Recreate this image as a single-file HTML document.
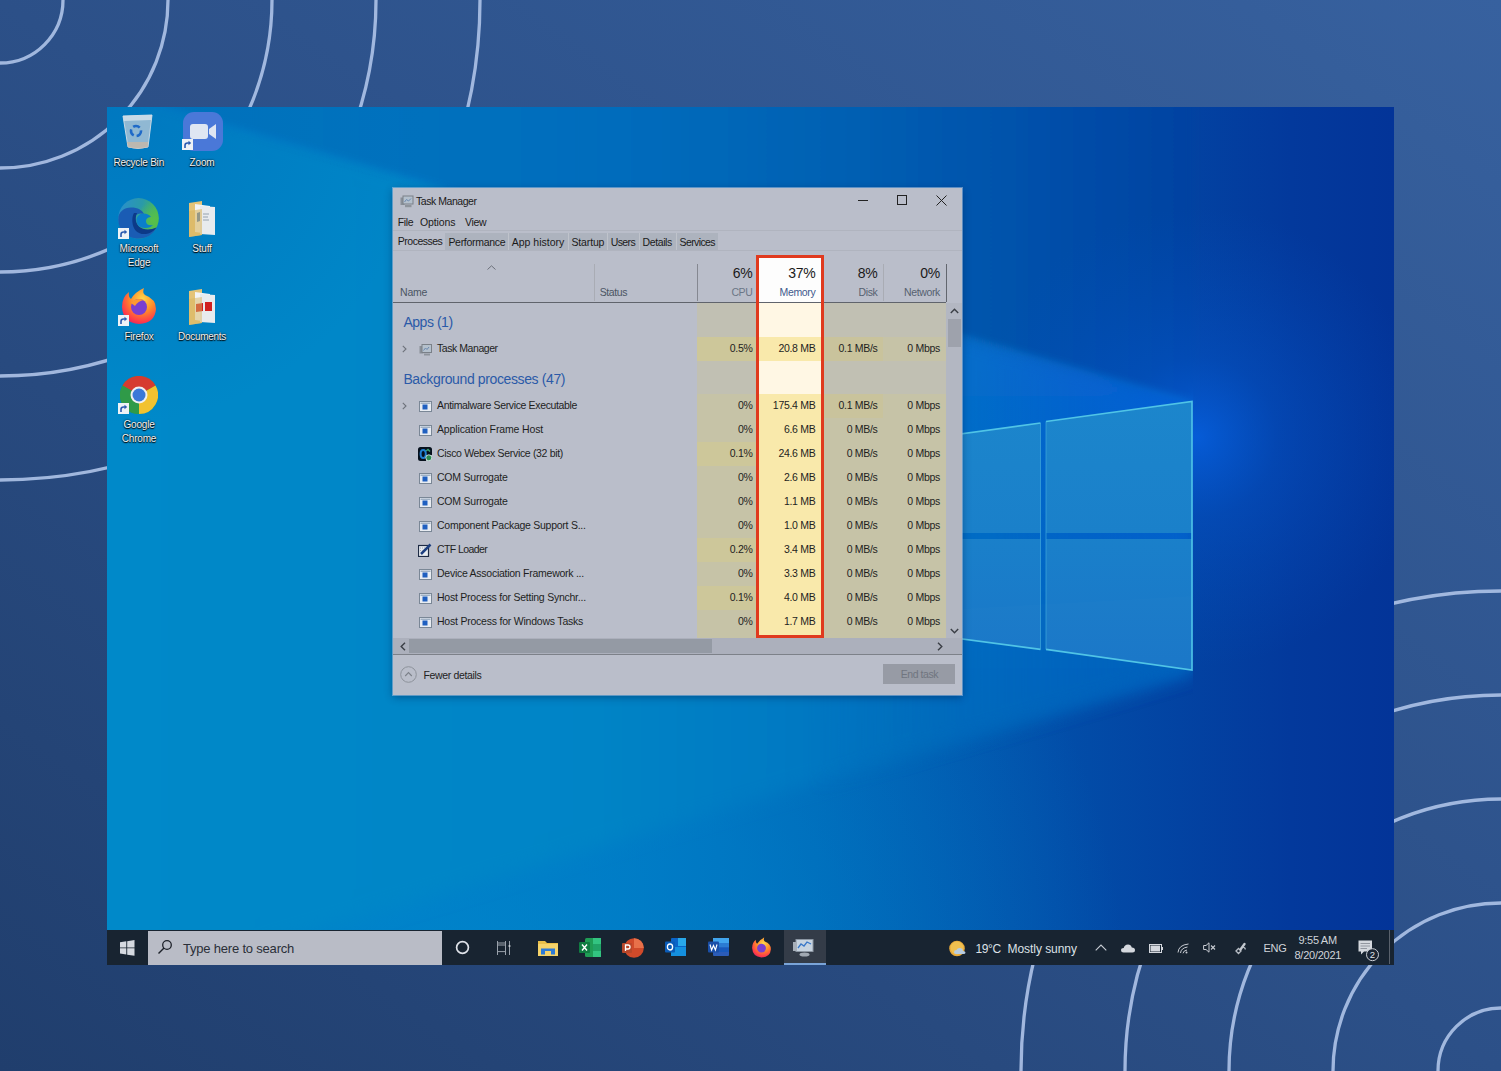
<!DOCTYPE html>
<html><head><meta charset="utf-8">
<style>
*{box-sizing:border-box;margin:0;padding:0}
html,body{width:1501px;height:1071px;overflow:hidden}
body{position:relative;font-family:"Liberation Sans",sans-serif;background:linear-gradient(to bottom left,#37619f 0%,#2c5088 50%,#203e6d 100%)}
.abs{position:absolute}
.tx{position:absolute;white-space:nowrap}
#rings{position:absolute;left:0;top:0}
#desk{position:absolute;left:107px;top:107px;width:1287px;height:858px;overflow:hidden}
#win{position:absolute;left:393px;top:188px;width:569px;height:507px;background:#babeca;border:0;box-shadow:0 0 0 1px rgba(170,195,225,.55),0 2px 8px rgba(0,25,70,.45);overflow:hidden;color:#1e1e1e}
#taskbar{position:absolute;left:107px;top:930px;width:1287px;height:35px;background:#182431}
.dl{position:absolute;text-align:center;color:#f2f2f2;font-size:10.5px;line-height:14px;letter-spacing:-0.3px;text-shadow:0 0 2px #000,0 1px 1px #000}
</style></head><body>
<svg id="rings" width="1501" height="1071" viewBox="0 0 1501 1071">
 <g fill="none" stroke="#aec3e8" stroke-opacity="0.9" stroke-width="3.3">
  <circle cx="0" cy="0" r="63"/><circle cx="0" cy="0" r="168"/><circle cx="0" cy="0" r="272"/><circle cx="0" cy="0" r="376"/><circle cx="0" cy="0" r="480"/>
  <circle cx="1501" cy="1071" r="63"/><circle cx="1501" cy="1071" r="168"/><circle cx="1501" cy="1071" r="272"/><circle cx="1501" cy="1071" r="376"/><circle cx="1501" cy="1071" r="480"/>
 </g>
</svg>
<div id="desk">
<svg width="1287" height="858" viewBox="0 0 1287 858" style="position:absolute;left:0;top:0">
 <defs>
  <linearGradient id="base" x1="0" y1="0" x2="1287" y2="0" gradientUnits="userSpaceOnUse">
   <stop offset="0" stop-color="#0079c0"/>
   <stop offset="0.40" stop-color="#006cbc"/>
   <stop offset="0.55" stop-color="#0062b4"/>
   <stop offset="0.72" stop-color="#0250aa"/>
   <stop offset="0.92" stop-color="#03399c"/>
   <stop offset="1" stop-color="#033498"/>
  </linearGradient>
  <linearGradient id="beam" x1="0" y1="0" x2="1085" y2="0" gradientUnits="userSpaceOnUse">
   <stop offset="0" stop-color="#0089c9"/>
   <stop offset="0.45" stop-color="#0084c6"/>
   <stop offset="0.75" stop-color="#0072c0"/>
   <stop offset="1" stop-color="#0266c8"/>
  </linearGradient>
  <radialGradient id="glow" cx="1090" cy="330" r="230" gradientUnits="userSpaceOnUse">
   <stop offset="0" stop-color="#0660e0" stop-opacity="0.85"/>
   <stop offset="0.35" stop-color="#0558d0" stop-opacity="0.4"/>
   <stop offset="1" stop-color="#0450c0" stop-opacity="0"/>
  </radialGradient>
  <linearGradient id="pane" x1="0" y1="290" x2="0" y2="565" gradientUnits="userSpaceOnUse">
   <stop offset="0" stop-color="#1c86cc"/>
   <stop offset="0.5" stop-color="#1a80ca"/>
   <stop offset="1" stop-color="#1976c8"/>
  </linearGradient>
  <filter id="bl" x="-5%" y="-5%" width="110%" height="110%"><feGaussianBlur stdDeviation="3"/></filter>
  <filter id="bl1" x="-5%" y="-5%" width="110%" height="110%"><feGaussianBlur stdDeviation="1.2"/></filter>
  <filter id="bl3" x="-20%" y="-20%" width="140%" height="140%"><feGaussianBlur stdDeviation="9"/></filter>
  <filter id="bl2" x="-20%" y="-20%" width="140%" height="140%"><feGaussianBlur stdDeviation="30"/></filter>
  <clipPath id="cl1"><rect x="-100" y="-100" width="1186" height="1100"/></clipPath>
  <radialGradient id="botg" cx="300" cy="900" r="720" gradientUnits="userSpaceOnUse">
   <stop offset="0" stop-color="#008cd0" stop-opacity="0.7"/>
   <stop offset="0.5" stop-color="#008cd0" stop-opacity="0.45"/>
   <stop offset="1" stop-color="#008cd0" stop-opacity="0"/>
  </radialGradient>
  <radialGradient id="tlg" cx="0" cy="0" r="320" gradientUnits="userSpaceOnUse">
   <stop offset="0" stop-color="#006ab8" stop-opacity="0.55"/>
   <stop offset="1" stop-color="#006ab8" stop-opacity="0"/>
  </radialGradient>
  <linearGradient id="beamv" x1="0" y1="230" x2="0" y2="650" gradientUnits="userSpaceOnUse">
   <stop offset="0" stop-color="#0868d8"/>
   <stop offset="0.5" stop-color="#0266c8"/>
   <stop offset="1" stop-color="#005eb0"/>
  </linearGradient>
  <linearGradient id="mkg" x1="700" y1="0" x2="1085" y2="0" gradientUnits="userSpaceOnUse">
   <stop offset="0" stop-color="#fff" stop-opacity="0"/>
   <stop offset="1" stop-color="#fff" stop-opacity="1"/>
  </linearGradient>
  <mask id="mk1" maskUnits="userSpaceOnUse" x="0" y="0" width="1287" height="858"><rect width="1287" height="858" fill="url(#mkg)"/></mask>
 </defs>
 <rect width="1287" height="858" fill="url(#base)"/>
 <rect width="1287" height="858" fill="url(#botg)"/>
 <g clip-path="url(#cl1)"><polygon points="-60,-40 1085,294 1085,564 -60,904" fill="url(#beam)" filter="url(#bl3)"/></g>
 <g clip-path="url(#cl1)" mask="url(#mk1)"><polygon points="-60,-40 1085,294 1085,564 -60,904" fill="url(#beamv)" filter="url(#bl3)"/></g>
 <polygon points="-80,-300 1086,-300 1086,294 -80,-37" fill="url(#base)" filter="url(#bl)"/>
 <rect width="600" height="500" fill="url(#tlg)"/>
 <ellipse cx="1110" cy="400" rx="260" ry="330" fill="url(#glow)"/>
 <line x1="-60" y1="-33" x2="1085" y2="294" stroke="#30a0ec" stroke-opacity="0.3" stroke-width="2" filter="url(#bl)"/>
 <g>
  <polygon points="780,337 933.5,316 933.5,426 780,426" fill="url(#pane)"/>
  <polygon points="780,432 933.5,432 933.5,542.4 780,522" fill="url(#pane)"/>
  <polygon points="939,314.5 1085,294.5 1085,426 939,426" fill="url(#pane)"/>
  <polygon points="939,432 1085,432 1085,563 939,542.4" fill="url(#pane)"/>
  <polygon points="780,506 1085,489 1085,563 780,522" fill="#ffffff" fill-opacity="0.012"/>
  <g stroke="#50c4e6" stroke-width="1.6" fill="none" stroke-linejoin="miter">
   <polyline points="780,337 933.5,316"/>
   <polyline points="939,314.5 1085,294.5 1085,563 939,542.4"/>
   <polyline points="780,522 933.5,542.4"/>
  </g>
  <g stroke="#3fa8dc" stroke-width="1" fill="none" opacity="0.7">
   <polyline points="933.5,316 933.5,542.4"/>
   <polyline points="939,314.5 939,542.4"/>
  </g>
 </g>
</svg>
<svg class="abs" style="left:14px;top:5px" width="34" height="38" viewBox="0 0 34 38"><path d="M2 4 L31 3 L27 35 Q17 38 7 35 Z" fill="#a9c3d6" fill-opacity="0.85" stroke="#c8d8e4" stroke-width="1"/><path d="M2 4 L31 3 L30 8 L3 9 Z" fill="#d4e2ec" fill-opacity="0.8"/><path d="M6 30 L27 30 L27 35 Q17 38 7 35 Z" fill="#c7b8a8" fill-opacity="0.8"/><circle cx="15" cy="19" r="5" fill="none" stroke="#1f6ac8" stroke-width="2.6" stroke-dasharray="7 3"/></svg><div class="dl" style="left:-18.30000000000001px;top:48.5px;width:100px;font-size:10px;line-height:14px;letter-spacing:-0.2px">Recycle Bin</div><svg class="abs" style="left:76px;top:5px" width="40" height="39" viewBox="0 0 40 39"><rect x="0" y="0" width="40" height="39" rx="11" fill="#4a78d8"/><rect x="7" y="12" width="18" height="15" rx="3" fill="#dfe6f2"/><path d="M26 17 L33 12 V27 L26 22 Z" fill="#dfe6f2"/></svg><svg class="abs" style="left:75px;top:32px" width="11" height="11" viewBox="0 0 11 11"><rect x="0" y="0" width="11" height="11" fill="#eef2f6"/><path d="M3 9 V6.5 Q3 4 5.5 4 H7.5" stroke="#2a5ab0" stroke-width="1.6" fill="none"/><path d="M6.5 1.8 L9.2 4 L6.5 6.2 Z" fill="#2a5ab0"/></svg><div class="dl" style="left:45px;top:48.5px;width:100px;font-size:10px;line-height:14px;letter-spacing:-0.2px">Zoom</div><svg class="abs" style="left:11px;top:91px" width="41" height="41" viewBox="0 0 41 41"><defs><linearGradient id="eg1" x1="0" y1="0" x2="1" y2="0.2"><stop offset="0" stop-color="#2a8ed0"/><stop offset="0.6" stop-color="#2a9aa8"/><stop offset="1" stop-color="#48b858"/></linearGradient><radialGradient id="eg3" cx="0.85" cy="0.55" r="0.45"><stop offset="0" stop-color="#58c048"/><stop offset="1" stop-color="#58c048" stop-opacity="0"/></radialGradient></defs><circle cx="20.5" cy="20.3" r="20.2" fill="url(#eg1)"/><circle cx="20.5" cy="20.3" r="20.2" fill="url(#eg3)"/><path d="M0.3,21 C0.3,14 6,9.5 13,9.5 C20,9.5 24,12 26,16 C22,14.5 18,16 16.5,19 C15,23 16,28 20,31 C25,34.5 33,34 38.5,29.5 C35.5,36 29,40.5 20.5,40.5 C9,40.5 0.3,32 0.3,21 Z" fill="#1a5cb4"/><path d="M16,15 C13.5,19 13.5,28 18,33 C23,38 33,37 38.5,29.5 C32,32.5 25,32 21,28.5 C17.5,25 17,19.5 19,15 Z" fill="#0c3a88"/><path d="M25.5,15.5 C21,15.5 18.5,19 18.5,22.5 C18.5,27 22,30 27,30 C31,30 33,29 35,27 C31,28 28,26.5 28,23.5 C28,20 31,19 33,19 C31.5,17 29,15.5 25.5,15.5 Z" fill="#0a7ecb"/></svg><svg class="abs" style="left:11px;top:121px" width="11" height="11" viewBox="0 0 11 11"><rect x="0" y="0" width="11" height="11" fill="#eef2f6"/><path d="M3 9 V6.5 Q3 4 5.5 4 H7.5" stroke="#2a5ab0" stroke-width="1.6" fill="none"/><path d="M6.5 1.8 L9.2 4 L6.5 6.2 Z" fill="#2a5ab0"/></svg><div class="dl" style="left:-18px;top:135px;width:100px;font-size:10px;line-height:14px;letter-spacing:-0.2px">Microsoft</div><div class="dl" style="left:-18px;top:149px;width:100px;font-size:10px;line-height:14px;letter-spacing:-0.2px">Edge</div><svg class="abs" style="left:81px;top:94px" width="28" height="37" viewBox="0 0 28 37"><path d="M1 2 L14 0 L14 34 L1 36 Z" fill="#e4c478"/><path d="M7 3 L22 5 L22 33 L7 31 Z" fill="#f2f4f6"/><path d="M12 5 L27 6 L27 34 L12 33 Z" fill="#e8ebee"/><path d="M9 12 L12 11 L12 20 L9 21 Z" fill="#2d6ac0"/><path d="M15 13 H21 M15 16 H20 M15 19 H21" stroke="#8090a0" stroke-width="0.8"/><path d="M1 36 L14 34 L14 8 L1 10 Z" fill="#d8b660" fill-opacity="0.6"/></svg><div class="dl" style="left:45px;top:135px;width:100px;font-size:10px;line-height:14px;letter-spacing:-0.2px">Stuff</div><svg class="abs" style="left:13px;top:180px" width="38" height="38" viewBox="0 0 38 38"><defs><radialGradient id="ff1" cx="0.6" cy="0.3" r="0.8"><stop offset="0" stop-color="#ffd84a"/><stop offset="0.45" stop-color="#ff8a2a"/><stop offset="0.8" stop-color="#ff3a4a"/><stop offset="1" stop-color="#d4206a"/></radialGradient></defs><path d="M19 37 Q3 36 2 20 Q2 10 9 5 Q8 10 11 12 Q15 5 24 1 Q22 6 25 8 Q36 12 36 22 Q35 36 19 37 Z" fill="url(#ff1)"/><circle cx="19" cy="20" r="8" fill="#7a3fd0"/><path d="M11 16 Q16 10 24 13 Q18 14 15 19 Z" fill="#ff9a30"/></svg><svg class="abs" style="left:11px;top:208px" width="11" height="11" viewBox="0 0 11 11"><rect x="0" y="0" width="11" height="11" fill="#eef2f6"/><path d="M3 9 V6.5 Q3 4 5.5 4 H7.5" stroke="#2a5ab0" stroke-width="1.6" fill="none"/><path d="M6.5 1.8 L9.2 4 L6.5 6.2 Z" fill="#2a5ab0"/></svg><div class="dl" style="left:-18px;top:222.7px;width:100px;font-size:10px;line-height:14px;letter-spacing:-0.2px">Firefox</div><svg class="abs" style="left:81px;top:182px" width="28" height="37" viewBox="0 0 28 37"><path d="M1 2 L14 0 L14 34 L1 36 Z" fill="#e4c478"/><path d="M7 3 L22 5 L22 33 L7 31 Z" fill="#f2f4f6"/><path d="M12 5 L27 6 L27 34 L12 33 Z" fill="#e8ebee"/><path d="M8 15 L15 14 L15 22 L8 23 Z" fill="#d02020"/><path d="M17 13 L24 13 L24 22 L17 22 Z" fill="#d02020"/><path d="M1 36 L14 34 L14 8 L1 10 Z" fill="#d8b660" fill-opacity="0.5"/></svg><div class="dl" style="left:45px;top:222.7px;width:100px;font-size:10px;line-height:14px;letter-spacing:-0.3px">Documents</div><svg class="abs" style="left:13px;top:268.6px" width="38" height="38" viewBox="0 0 38 38"><circle cx="19" cy="19" r="19" fill="#2f9a48"/><path d="M19 19 L2.5 9.5 A19 19 0 0 1 35.5 9.5 Z" fill="#d63b30"/><path d="M19 19 L35.5 9.5 A19 19 0 0 1 19 38 Z" fill="#f2c230"/><path d="M19 19 L19 38 A19 19 0 0 1 2.5 9.5 Z" fill="#2f9a48"/><circle cx="19" cy="19" r="8.5" fill="#f0f0f0"/><circle cx="19" cy="19" r="6.5" fill="#3b78d8"/></svg><svg class="abs" style="left:11px;top:296px" width="11" height="11" viewBox="0 0 11 11"><rect x="0" y="0" width="11" height="11" fill="#eef2f6"/><path d="M3 9 V6.5 Q3 4 5.5 4 H7.5" stroke="#2a5ab0" stroke-width="1.6" fill="none"/><path d="M6.5 1.8 L9.2 4 L6.5 6.2 Z" fill="#2a5ab0"/></svg><div class="dl" style="left:-18px;top:311px;width:100px;font-size:10px;line-height:14px;letter-spacing:-0.2px">Google</div><div class="dl" style="left:-18px;top:325px;width:100px;font-size:10px;line-height:14px;letter-spacing:-0.2px">Chrome</div></div>
<div id="win"><svg class="abs" style="left:6.5px;top:7px" width="14" height="13" viewBox="0 0 14 13"><rect x="0.5" y="2.5" width="4" height="7.5" fill="#8a9098"/><rect x="3" y="1" width="10" height="8" fill="#b4c0cc" stroke="#7a8088" stroke-width="1"/><path d="M4.5 7 L6.5 4.5 L8.5 6 L11 3.5" stroke="#6a88b0" stroke-width="1" fill="none"/><rect x="5" y="10" width="6.5" height="2.2" fill="#8e949c"/></svg><div class="tx" style="left:23px;top:7.81px;font-size:10.5px;line-height:10.5px;color:#1a1a1a;letter-spacing:-0.45px;">Task Manager</div><div class="abs" style="left:465px;top:12px;width:10px;height:1px;background:#222"></div><div class="abs" style="left:504px;top:7px;width:10px;height:10px;border:1px solid #222"></div><svg class="abs" style="left:543px;top:7px" width="11" height="11" viewBox="0 0 11 11"><path d="M0.5 0.5 L10.5 10.5 M10.5 0.5 L0.5 10.5" stroke="#222" stroke-width="1"/></svg><div class="tx" style="left:4.7px;top:28.81px;font-size:10.5px;line-height:10.5px;color:#1a1a1a;letter-spacing:-0.3px;">File</div><div class="tx" style="left:27px;top:28.81px;font-size:10.5px;line-height:10.5px;color:#1a1a1a;letter-spacing:-0.1px;">Options</div><div class="tx" style="left:72px;top:28.81px;font-size:10.5px;line-height:10.5px;color:#1a1a1a;letter-spacing:-0.3px;">View</div><div class="abs" style="left:0;top:41.5px;width:569px;height:1px;background:#b0b4bf"></div><div class="abs" style="left:51.7px;top:45px;width:273.3px;height:17px;background:#adb3be"></div><div class="abs" style="left:115.4px;top:45px;width:1px;height:17px;background:#bfc3cb"></div><div class="abs" style="left:174.8px;top:45px;width:1px;height:17px;background:#bfc3cb"></div><div class="abs" style="left:214.4px;top:45px;width:1px;height:17px;background:#bfc3cb"></div><div class="abs" style="left:246.0px;top:45px;width:1px;height:17px;background:#bfc3cb"></div><div class="abs" style="left:282.5px;top:45px;width:1px;height:17px;background:#bfc3cb"></div><div class="abs" style="left:0;top:62.2px;width:569px;height:1px;background:#b0b4bf"></div><div class="tx" style="left:4.8px;top:48.41px;font-size:10.5px;line-height:10.5px;color:#1a1a1a;letter-spacing:-0.5px;">Processes</div><div class="tx" style="left:55.4px;top:49.41px;font-size:10.5px;line-height:10.5px;color:#1a1a1a;letter-spacing:-0.3px;">Performance</div><div class="tx" style="left:118.7px;top:49.41px;font-size:10.5px;line-height:10.5px;color:#1a1a1a;letter-spacing:0px;">App history</div><div class="tx" style="left:178.5px;top:49.41px;font-size:10.5px;line-height:10.5px;color:#1a1a1a;letter-spacing:-0.15px;">Startup</div><div class="tx" style="left:217.7px;top:49.41px;font-size:10.5px;line-height:10.5px;color:#1a1a1a;letter-spacing:-0.6px;">Users</div><div class="tx" style="left:249.6px;top:49.41px;font-size:10.5px;line-height:10.5px;color:#1a1a1a;letter-spacing:-0.4px;">Details</div><div class="tx" style="left:286.5px;top:49.41px;font-size:10.5px;line-height:10.5px;color:#1a1a1a;letter-spacing:-0.6px;">Services</div><div class="abs" style="left:364px;top:68px;width:67px;height:46px;background:#fdfdfd"></div><svg class="abs" style="left:94px;top:77px" width="9" height="5" viewBox="0 0 9 5"><path d="M0.5 4.5 L4.5 0.8 L8.5 4.5" stroke="#6b707a" stroke-width="1" fill="none"/></svg><div class="tx" style="left:7px;top:98.81px;font-size:10.5px;line-height:10.5px;color:#4b5563;letter-spacing:-0.2px;">Name</div><div class="tx" style="left:206.7px;top:98.81px;font-size:10.5px;line-height:10.5px;color:#4b5563;letter-spacing:-0.4px;">Status</div><div class="abs" style="left:201px;top:76px;width:1px;height:37px;background:#a9acb4"></div><div class="abs" style="left:303.5px;top:76px;width:1px;height:37px;background:#858891"></div><div class="abs" style="left:490px;top:76px;width:1px;height:37px;background:#a9acb4"></div><div class="abs" style="left:552.5px;top:76px;width:1px;height:38px;background:#62666e"></div><div class="abs" style="left:0;top:114px;width:553px;height:1px;background:#60646c"></div><div class="tx" style="right:209.5px;top:78.15px;font-size:14px;line-height:14px;color:#1a1a1a;letter-spacing:-0.3px;">6%</div><div class="tx" style="right:209.5px;top:99.11px;font-size:10.5px;line-height:10.5px;color:#6b7686;letter-spacing:-0.35px;">CPU</div><div class="tx" style="right:146.6px;top:78.15px;font-size:14px;line-height:14px;color:#1a1a1a;letter-spacing:-0.3px;">37%</div><div class="tx" style="right:146.6px;top:99.11px;font-size:10.5px;line-height:10.5px;color:#3f5a8c;letter-spacing:-0.35px;">Memory</div><div class="tx" style="right:84.5px;top:78.15px;font-size:14px;line-height:14px;color:#1a1a1a;letter-spacing:-0.3px;">8%</div><div class="tx" style="right:84.5px;top:99.11px;font-size:10.5px;line-height:10.5px;color:#566170;letter-spacing:-0.35px;">Disk</div><div class="tx" style="right:22px;top:78.15px;font-size:14px;line-height:14px;color:#1a1a1a;letter-spacing:-0.3px;">0%</div><div class="tx" style="right:22px;top:99.11px;font-size:10.5px;line-height:10.5px;color:#566170;letter-spacing:-0.35px;">Network</div><div class="abs" style="left:0;top:115px;width:553px;height:335px;overflow:hidden"><div class="abs" style="left:304px;top:0.0px;width:249px;height:34px;background:#c1c0b3"></div><div class="abs" style="left:364px;top:0.0px;width:67px;height:34px;background:#fff7e4"></div><div class="tx" style="left:10.4px;top:12.45px;font-size:14px;line-height:14px;color:#2b5aa8;letter-spacing:-0.46px;">Apps (1)</div><div class="abs" style="left:304px;top:34.0px;width:60px;height:24px;background:#cdc79a"></div><div class="abs" style="left:364px;top:34.0px;width:67px;height:24px;background:#f9e9ab"></div><div class="abs" style="left:431px;top:34.0px;width:59px;height:24px;background:#c9c39c"></div><div class="abs" style="left:490px;top:34.0px;width:63px;height:24px;background:#c6c3a7"></div><svg class="abs" style="left:9px;top:42.0px" width="5" height="8" viewBox="0 0 5 8"><path d="M0.8 0.8 L4 4 L0.8 7.2" stroke="#6d727b" stroke-width="1.1" fill="none"/></svg><svg class="abs" style="left:25.5px;top:40.5px" width="13" height="12" viewBox="0 0 13 12"><rect x="0.5" y="2" width="4" height="7.5" fill="#8a9098"/><rect x="3" y="0.5" width="9.5" height="8" fill="#b4c0cc" stroke="#7a8088" stroke-width="1"/><path d="M4.5 6.5 L6.5 4 L8 5.5 L10 3" stroke="#6a88b0" stroke-width="1" fill="none"/><rect x="5" y="9.5" width="6" height="2" fill="#8e949c"/></svg><div class="tx" style="left:44px;top:40.11px;font-size:10.5px;line-height:10.5px;color:#1e1e1e;letter-spacing:-0.44px;">Task Manager</div><div class="tx" style="right:193.5px;top:40.11px;font-size:10.5px;line-height:10.5px;color:#1e1e1e;letter-spacing:-0.3px;">0.5%</div><div class="tx" style="right:130.6px;top:40.11px;font-size:10.5px;line-height:10.5px;color:#1e1e1e;letter-spacing:-0.3px;">20.8 MB</div><div class="tx" style="right:68.5px;top:40.11px;font-size:10.5px;line-height:10.5px;color:#1e1e1e;letter-spacing:-0.3px;">0.1 MB/s</div><div class="tx" style="right:6px;top:40.11px;font-size:10.5px;line-height:10.5px;color:#1e1e1e;letter-spacing:-0.3px;">0 Mbps</div><div class="abs" style="left:304px;top:58.0px;width:249px;height:33px;background:#c1c0b3"></div><div class="abs" style="left:364px;top:58.0px;width:67px;height:33px;background:#fff7e4"></div><div class="tx" style="left:10.4px;top:69.45px;font-size:14px;line-height:14px;color:#2b5aa8;letter-spacing:-0.38px;">Background processes (47)</div><div class="abs" style="left:304px;top:91.0px;width:60px;height:24px;background:#c6c3a7"></div><div class="abs" style="left:364px;top:91.0px;width:67px;height:24px;background:#f9e9ab"></div><div class="abs" style="left:431px;top:91.0px;width:59px;height:24px;background:#c9c39c"></div><div class="abs" style="left:490px;top:91.0px;width:63px;height:24px;background:#c6c3a7"></div><svg class="abs" style="left:9px;top:99.0px" width="5" height="8" viewBox="0 0 5 8"><path d="M0.8 0.8 L4 4 L0.8 7.2" stroke="#6d727b" stroke-width="1.1" fill="none"/></svg><svg class="abs" style="left:25.5px;top:97.5px" width="13" height="11" viewBox="0 0 13 11"><rect x="0.5" y="0.5" width="12" height="10" fill="#e8ecf2" stroke="#7a8796" stroke-width="1"/><rect x="1.5" y="1.5" width="10" height="1.5" fill="#9fb0c4"/><rect x="3.5" y="3.5" width="5" height="5" fill="#1f5fc0"/></svg><div class="tx" style="left:44px;top:97.11px;font-size:10.5px;line-height:10.5px;color:#1e1e1e;letter-spacing:-0.35px;">Antimalware Service Executable</div><div class="tx" style="right:193.5px;top:97.11px;font-size:10.5px;line-height:10.5px;color:#1e1e1e;letter-spacing:-0.3px;">0%</div><div class="tx" style="right:130.6px;top:97.11px;font-size:10.5px;line-height:10.5px;color:#1e1e1e;letter-spacing:-0.3px;">175.4 MB</div><div class="tx" style="right:68.5px;top:97.11px;font-size:10.5px;line-height:10.5px;color:#1e1e1e;letter-spacing:-0.3px;">0.1 MB/s</div><div class="tx" style="right:6px;top:97.11px;font-size:10.5px;line-height:10.5px;color:#1e1e1e;letter-spacing:-0.3px;">0 Mbps</div><div class="abs" style="left:304px;top:115.0px;width:60px;height:24px;background:#c6c3a7"></div><div class="abs" style="left:364px;top:115.0px;width:67px;height:24px;background:#f9e9ab"></div><div class="abs" style="left:431px;top:115.0px;width:59px;height:24px;background:#c6c3a7"></div><div class="abs" style="left:490px;top:115.0px;width:63px;height:24px;background:#c6c3a7"></div><svg class="abs" style="left:25.5px;top:121.5px" width="13" height="11" viewBox="0 0 13 11"><rect x="0.5" y="0.5" width="12" height="10" fill="#e8ecf2" stroke="#7a8796" stroke-width="1"/><rect x="1.5" y="1.5" width="10" height="1.5" fill="#9fb0c4"/><rect x="3.5" y="3.5" width="5" height="5" fill="#1f5fc0"/></svg><div class="tx" style="left:44px;top:121.11px;font-size:10.5px;line-height:10.5px;color:#1e1e1e;letter-spacing:-0.14px;">Application Frame Host</div><div class="tx" style="right:193.5px;top:121.11px;font-size:10.5px;line-height:10.5px;color:#1e1e1e;letter-spacing:-0.3px;">0%</div><div class="tx" style="right:130.6px;top:121.11px;font-size:10.5px;line-height:10.5px;color:#1e1e1e;letter-spacing:-0.3px;">6.6 MB</div><div class="tx" style="right:68.5px;top:121.11px;font-size:10.5px;line-height:10.5px;color:#1e1e1e;letter-spacing:-0.3px;">0 MB/s</div><div class="tx" style="right:6px;top:121.11px;font-size:10.5px;line-height:10.5px;color:#1e1e1e;letter-spacing:-0.3px;">0 Mbps</div><div class="abs" style="left:304px;top:139.0px;width:60px;height:24px;background:#cdc79a"></div><div class="abs" style="left:364px;top:139.0px;width:67px;height:24px;background:#f9e9ab"></div><div class="abs" style="left:431px;top:139.0px;width:59px;height:24px;background:#c6c3a7"></div><div class="abs" style="left:490px;top:139.0px;width:63px;height:24px;background:#c6c3a7"></div><svg class="abs" style="left:24.5px;top:144.0px" width="14" height="14" viewBox="0 0 14 14"><path d="M2.5 0 H11.5 Q14 0 14 2.5 V8 H8 V14 H2.5 Q0 14 0 11.5 V2.5 Q0 0 2.5 0 Z" fill="#06101c"/><ellipse cx="5.2" cy="7" rx="2.6" ry="4" fill="none" stroke="#1f7fd0" stroke-width="2"/><path d="M8 4 L10 2.5 L12 4.5" stroke="#3aa070" stroke-width="1.5" fill="none"/><circle cx="10.8" cy="10.8" r="3" fill="#2a8a50" stroke="#d0e0e0" stroke-width="0.9"/></svg><div class="tx" style="left:44px;top:145.11px;font-size:10.5px;line-height:10.5px;color:#1e1e1e;letter-spacing:-0.33px;">Cisco Webex Service (32 bit)</div><div class="tx" style="right:193.5px;top:145.11px;font-size:10.5px;line-height:10.5px;color:#1e1e1e;letter-spacing:-0.3px;">0.1%</div><div class="tx" style="right:130.6px;top:145.11px;font-size:10.5px;line-height:10.5px;color:#1e1e1e;letter-spacing:-0.3px;">24.6 MB</div><div class="tx" style="right:68.5px;top:145.11px;font-size:10.5px;line-height:10.5px;color:#1e1e1e;letter-spacing:-0.3px;">0 MB/s</div><div class="tx" style="right:6px;top:145.11px;font-size:10.5px;line-height:10.5px;color:#1e1e1e;letter-spacing:-0.3px;">0 Mbps</div><div class="abs" style="left:304px;top:163.0px;width:60px;height:24px;background:#c6c3a7"></div><div class="abs" style="left:364px;top:163.0px;width:67px;height:24px;background:#f9e9ab"></div><div class="abs" style="left:431px;top:163.0px;width:59px;height:24px;background:#c6c3a7"></div><div class="abs" style="left:490px;top:163.0px;width:63px;height:24px;background:#c6c3a7"></div><svg class="abs" style="left:25.5px;top:169.5px" width="13" height="11" viewBox="0 0 13 11"><rect x="0.5" y="0.5" width="12" height="10" fill="#e8ecf2" stroke="#7a8796" stroke-width="1"/><rect x="1.5" y="1.5" width="10" height="1.5" fill="#9fb0c4"/><rect x="3.5" y="3.5" width="5" height="5" fill="#1f5fc0"/></svg><div class="tx" style="left:44px;top:169.11px;font-size:10.5px;line-height:10.5px;color:#1e1e1e;letter-spacing:-0.22px;">COM Surrogate</div><div class="tx" style="right:193.5px;top:169.11px;font-size:10.5px;line-height:10.5px;color:#1e1e1e;letter-spacing:-0.3px;">0%</div><div class="tx" style="right:130.6px;top:169.11px;font-size:10.5px;line-height:10.5px;color:#1e1e1e;letter-spacing:-0.3px;">2.6 MB</div><div class="tx" style="right:68.5px;top:169.11px;font-size:10.5px;line-height:10.5px;color:#1e1e1e;letter-spacing:-0.3px;">0 MB/s</div><div class="tx" style="right:6px;top:169.11px;font-size:10.5px;line-height:10.5px;color:#1e1e1e;letter-spacing:-0.3px;">0 Mbps</div><div class="abs" style="left:304px;top:187.0px;width:60px;height:24px;background:#c6c3a7"></div><div class="abs" style="left:364px;top:187.0px;width:67px;height:24px;background:#f9e9ab"></div><div class="abs" style="left:431px;top:187.0px;width:59px;height:24px;background:#c6c3a7"></div><div class="abs" style="left:490px;top:187.0px;width:63px;height:24px;background:#c6c3a7"></div><svg class="abs" style="left:25.5px;top:193.5px" width="13" height="11" viewBox="0 0 13 11"><rect x="0.5" y="0.5" width="12" height="10" fill="#e8ecf2" stroke="#7a8796" stroke-width="1"/><rect x="1.5" y="1.5" width="10" height="1.5" fill="#9fb0c4"/><rect x="3.5" y="3.5" width="5" height="5" fill="#1f5fc0"/></svg><div class="tx" style="left:44px;top:193.11px;font-size:10.5px;line-height:10.5px;color:#1e1e1e;letter-spacing:-0.22px;">COM Surrogate</div><div class="tx" style="right:193.5px;top:193.11px;font-size:10.5px;line-height:10.5px;color:#1e1e1e;letter-spacing:-0.3px;">0%</div><div class="tx" style="right:130.6px;top:193.11px;font-size:10.5px;line-height:10.5px;color:#1e1e1e;letter-spacing:-0.3px;">1.1 MB</div><div class="tx" style="right:68.5px;top:193.11px;font-size:10.5px;line-height:10.5px;color:#1e1e1e;letter-spacing:-0.3px;">0 MB/s</div><div class="tx" style="right:6px;top:193.11px;font-size:10.5px;line-height:10.5px;color:#1e1e1e;letter-spacing:-0.3px;">0 Mbps</div><div class="abs" style="left:304px;top:211.0px;width:60px;height:24px;background:#c6c3a7"></div><div class="abs" style="left:364px;top:211.0px;width:67px;height:24px;background:#f9e9ab"></div><div class="abs" style="left:431px;top:211.0px;width:59px;height:24px;background:#c6c3a7"></div><div class="abs" style="left:490px;top:211.0px;width:63px;height:24px;background:#c6c3a7"></div><svg class="abs" style="left:25.5px;top:217.5px" width="13" height="11" viewBox="0 0 13 11"><rect x="0.5" y="0.5" width="12" height="10" fill="#e8ecf2" stroke="#7a8796" stroke-width="1"/><rect x="1.5" y="1.5" width="10" height="1.5" fill="#9fb0c4"/><rect x="3.5" y="3.5" width="5" height="5" fill="#1f5fc0"/></svg><div class="tx" style="left:44px;top:217.11px;font-size:10.5px;line-height:10.5px;color:#1e1e1e;letter-spacing:-0.26px;">Component Package Support S...</div><div class="tx" style="right:193.5px;top:217.11px;font-size:10.5px;line-height:10.5px;color:#1e1e1e;letter-spacing:-0.3px;">0%</div><div class="tx" style="right:130.6px;top:217.11px;font-size:10.5px;line-height:10.5px;color:#1e1e1e;letter-spacing:-0.3px;">1.0 MB</div><div class="tx" style="right:68.5px;top:217.11px;font-size:10.5px;line-height:10.5px;color:#1e1e1e;letter-spacing:-0.3px;">0 MB/s</div><div class="tx" style="right:6px;top:217.11px;font-size:10.5px;line-height:10.5px;color:#1e1e1e;letter-spacing:-0.3px;">0 Mbps</div><div class="abs" style="left:304px;top:235.0px;width:60px;height:24px;background:#cdc79a"></div><div class="abs" style="left:364px;top:235.0px;width:67px;height:24px;background:#f9e9ab"></div><div class="abs" style="left:431px;top:235.0px;width:59px;height:24px;background:#c6c3a7"></div><div class="abs" style="left:490px;top:235.0px;width:63px;height:24px;background:#c6c3a7"></div><svg class="abs" style="left:24.5px;top:240.0px" width="14" height="14" viewBox="0 0 14 14"><rect x="0.5" y="2.5" width="10" height="11" fill="#e8ecf0" stroke="#1d2a44" stroke-width="1.2"/><path d="M3 11 L12.5 1.5" stroke="#1d3f80" stroke-width="2.5"/><path d="M2 5 H8 M2 7.5 H6" stroke="#8a96a8" stroke-width="0.8" stroke-dasharray="1 1"/></svg><div class="tx" style="left:44px;top:241.11px;font-size:10.5px;line-height:10.5px;color:#1e1e1e;letter-spacing:-0.6px;">CTF Loader</div><div class="tx" style="right:193.5px;top:241.11px;font-size:10.5px;line-height:10.5px;color:#1e1e1e;letter-spacing:-0.3px;">0.2%</div><div class="tx" style="right:130.6px;top:241.11px;font-size:10.5px;line-height:10.5px;color:#1e1e1e;letter-spacing:-0.3px;">3.4 MB</div><div class="tx" style="right:68.5px;top:241.11px;font-size:10.5px;line-height:10.5px;color:#1e1e1e;letter-spacing:-0.3px;">0 MB/s</div><div class="tx" style="right:6px;top:241.11px;font-size:10.5px;line-height:10.5px;color:#1e1e1e;letter-spacing:-0.3px;">0 Mbps</div><div class="abs" style="left:304px;top:259.0px;width:60px;height:24px;background:#c6c3a7"></div><div class="abs" style="left:364px;top:259.0px;width:67px;height:24px;background:#f9e9ab"></div><div class="abs" style="left:431px;top:259.0px;width:59px;height:24px;background:#c6c3a7"></div><div class="abs" style="left:490px;top:259.0px;width:63px;height:24px;background:#c6c3a7"></div><svg class="abs" style="left:25.5px;top:265.5px" width="13" height="11" viewBox="0 0 13 11"><rect x="0.5" y="0.5" width="12" height="10" fill="#e8ecf2" stroke="#7a8796" stroke-width="1"/><rect x="1.5" y="1.5" width="10" height="1.5" fill="#9fb0c4"/><rect x="3.5" y="3.5" width="5" height="5" fill="#1f5fc0"/></svg><div class="tx" style="left:44px;top:265.11px;font-size:10.5px;line-height:10.5px;color:#1e1e1e;letter-spacing:-0.26px;">Device Association Framework ...</div><div class="tx" style="right:193.5px;top:265.11px;font-size:10.5px;line-height:10.5px;color:#1e1e1e;letter-spacing:-0.3px;">0%</div><div class="tx" style="right:130.6px;top:265.11px;font-size:10.5px;line-height:10.5px;color:#1e1e1e;letter-spacing:-0.3px;">3.3 MB</div><div class="tx" style="right:68.5px;top:265.11px;font-size:10.5px;line-height:10.5px;color:#1e1e1e;letter-spacing:-0.3px;">0 MB/s</div><div class="tx" style="right:6px;top:265.11px;font-size:10.5px;line-height:10.5px;color:#1e1e1e;letter-spacing:-0.3px;">0 Mbps</div><div class="abs" style="left:304px;top:283.0px;width:60px;height:24px;background:#cdc79a"></div><div class="abs" style="left:364px;top:283.0px;width:67px;height:24px;background:#f9e9ab"></div><div class="abs" style="left:431px;top:283.0px;width:59px;height:24px;background:#c6c3a7"></div><div class="abs" style="left:490px;top:283.0px;width:63px;height:24px;background:#c6c3a7"></div><svg class="abs" style="left:25.5px;top:289.5px" width="13" height="11" viewBox="0 0 13 11"><rect x="0.5" y="0.5" width="12" height="10" fill="#e8ecf2" stroke="#7a8796" stroke-width="1"/><rect x="1.5" y="1.5" width="10" height="1.5" fill="#9fb0c4"/><rect x="3.5" y="3.5" width="5" height="5" fill="#1f5fc0"/></svg><div class="tx" style="left:44px;top:289.11px;font-size:10.5px;line-height:10.5px;color:#1e1e1e;letter-spacing:-0.24px;">Host Process for Setting Synchr...</div><div class="tx" style="right:193.5px;top:289.11px;font-size:10.5px;line-height:10.5px;color:#1e1e1e;letter-spacing:-0.3px;">0.1%</div><div class="tx" style="right:130.6px;top:289.11px;font-size:10.5px;line-height:10.5px;color:#1e1e1e;letter-spacing:-0.3px;">4.0 MB</div><div class="tx" style="right:68.5px;top:289.11px;font-size:10.5px;line-height:10.5px;color:#1e1e1e;letter-spacing:-0.3px;">0 MB/s</div><div class="tx" style="right:6px;top:289.11px;font-size:10.5px;line-height:10.5px;color:#1e1e1e;letter-spacing:-0.3px;">0 Mbps</div><div class="abs" style="left:304px;top:307.0px;width:60px;height:24px;background:#c6c3a7"></div><div class="abs" style="left:364px;top:307.0px;width:67px;height:24px;background:#f9e9ab"></div><div class="abs" style="left:431px;top:307.0px;width:59px;height:24px;background:#c6c3a7"></div><div class="abs" style="left:490px;top:307.0px;width:63px;height:24px;background:#c6c3a7"></div><svg class="abs" style="left:25.5px;top:313.5px" width="13" height="11" viewBox="0 0 13 11"><rect x="0.5" y="0.5" width="12" height="10" fill="#e8ecf2" stroke="#7a8796" stroke-width="1"/><rect x="1.5" y="1.5" width="10" height="1.5" fill="#9fb0c4"/><rect x="3.5" y="3.5" width="5" height="5" fill="#1f5fc0"/></svg><div class="tx" style="left:44px;top:313.11px;font-size:10.5px;line-height:10.5px;color:#1e1e1e;letter-spacing:-0.22px;">Host Process for Windows Tasks</div><div class="tx" style="right:193.5px;top:313.11px;font-size:10.5px;line-height:10.5px;color:#1e1e1e;letter-spacing:-0.3px;">0%</div><div class="tx" style="right:130.6px;top:313.11px;font-size:10.5px;line-height:10.5px;color:#1e1e1e;letter-spacing:-0.3px;">1.7 MB</div><div class="tx" style="right:68.5px;top:313.11px;font-size:10.5px;line-height:10.5px;color:#1e1e1e;letter-spacing:-0.3px;">0 MB/s</div><div class="tx" style="right:6px;top:313.11px;font-size:10.5px;line-height:10.5px;color:#1e1e1e;letter-spacing:-0.3px;">0 Mbps</div><div class="abs" style="left:304px;top:331.0px;width:60px;height:24px;background:#c6c3a7"></div><div class="abs" style="left:364px;top:331.0px;width:67px;height:24px;background:#f9e9ab"></div><div class="abs" style="left:431px;top:331.0px;width:59px;height:24px;background:#c6c3a7"></div><div class="abs" style="left:490px;top:331.0px;width:63px;height:24px;background:#c6c3a7"></div><div class="tx" style="right:193.5px;top:337.11px;font-size:10.5px;line-height:10.5px;color:#1e1e1e;letter-spacing:-0.3px;">0%</div></div><div class="abs" style="left:363px;top:67.4px;width:68.3px;height:382.6px;border:3px solid #e03a1e"></div><div class="abs" style="left:553px;top:115px;width:16px;height:335px;background:#b3b7c2"></div><svg class="abs" style="left:557px;top:120px" width="9" height="6" viewBox="0 0 9 6"><path d="M0.8 5 L4.5 1.2 L8.2 5" stroke="#3b3f46" stroke-width="1.4" fill="none"/></svg><div class="abs" style="left:555px;top:130.5px;width:13.3px;height:28.3px;background:#9ea2ac"></div><svg class="abs" style="left:557px;top:440px" width="9" height="6" viewBox="0 0 9 6"><path d="M0.8 1 L4.5 4.8 L8.2 1" stroke="#3b3f46" stroke-width="1.4" fill="none"/></svg><div class="abs" style="left:0;top:450px;width:569px;height:15.5px;background:#acb0bc"></div><div class="abs" style="left:16px;top:450.5px;width:303px;height:14.5px;background:#949aa4"></div><svg class="abs" style="left:7px;top:454px" width="6" height="9" viewBox="0 0 6 9"><path d="M5 0.8 L1.2 4.5 L5 8.2" stroke="#3b3f46" stroke-width="1.4" fill="none"/></svg><svg class="abs" style="left:544px;top:454px" width="6" height="9" viewBox="0 0 6 9"><path d="M1 0.8 L4.8 4.5 L1 8.2" stroke="#3b3f46" stroke-width="1.4" fill="none"/></svg><div class="abs" style="left:0;top:465.5px;width:569px;height:1px;background:#7d8189"></div><svg class="abs" style="left:6.5px;top:477.5px" width="17" height="17" viewBox="0 0 17 17"><circle cx="8.5" cy="8.5" r="7.8" fill="none" stroke="#8d929b" stroke-width="1"/><path d="M5.2 10 L8.5 6.6 L11.8 10" stroke="#7b8089" stroke-width="1.1" fill="none"/></svg><div class="tx" style="left:30.5px;top:482.11px;font-size:10.5px;line-height:10.5px;color:#222;letter-spacing:-0.35px;">Fewer details</div><div class="abs" style="left:490px;top:476px;width:72px;height:19.5px;background:#979ba5"></div><div class="tx" style="right:24px;top:480.61px;font-size:10.5px;line-height:10.5px;color:#70757f;letter-spacing:-0.45px;">End task</div></div>
<div id="taskbar"><svg class="abs" style="left:13px;top:9.5px" width="15" height="16" viewBox="0 0 15 16"><path d="M0 2.2 L6.3 1.3 V7.4 H0 Z M7.2 1.2 L14.5 0 V7.4 H7.2 Z M0 8.3 H6.3 V14.5 L0 13.6 Z M7.2 8.3 H14.5 V15.8 L7.2 14.7 Z" fill="#d5d9e0"/></svg><div class="abs" style="left:41px;top:1px;width:294px;height:34px;background:#b9bcc6"></div><svg class="abs" style="left:50px;top:9px" width="16" height="16" viewBox="0 0 16 16"><circle cx="10" cy="6" r="4.3" fill="none" stroke="#1e222a" stroke-width="1.3"/><path d="M7 9 L1.5 14.5" stroke="#1e222a" stroke-width="1.4"/></svg><div class="tx" style="left:76px;top:12px;font-size:13px;line-height:13px;color:#2a2f38;letter-spacing:-0.2px">Type here to search</div><svg class="abs" style="left:348px;top:10px" width="15" height="15" viewBox="0 0 15 15"><circle cx="7.5" cy="7.5" r="5.9" fill="none" stroke="#dfe3ea" stroke-width="1.7"/></svg><svg class="abs" style="left:389px;top:9.5px" width="16" height="16" viewBox="0 0 16 16"><path d="M1.5 1 V15 M9.5 1 V15 M13.5 1 V15 M1.5 3 H9.5 M1.5 5 H9.5 M1.5 11.6 H9.5" stroke="#9aa2ac" stroke-width="1" fill="none"/><circle cx="13.5" cy="6" r="1.1" fill="#c8ccd3"/></svg><svg class="abs" style="left:431px;top:9.5px" width="20" height="16" viewBox="0 0 20 16"><path d="M0 1 H7 L9 3 H20 V16 H0 Z" fill="#e9bf4a"/><path d="M0 4 H20 V16 H0 Z" fill="#f5d36a"/><rect x="3" y="8.5" width="14" height="6" fill="#2c7ad6"/><rect x="7" y="11" width="6" height="4" fill="#f5d36a"/></svg><svg class="abs" style="left:472px;top:8px" width="22" height="19" viewBox="0 0 22 19"><rect x="6" y="0" width="16" height="19" rx="1.5" fill="#1f9d55"/><rect x="14" y="0" width="8" height="19" fill="#33c481"/><rect x="14" y="6" width="8" height="7" fill="#21a366"/><rect x="0" y="4" width="11" height="11" rx="1" fill="#107c41"/><path d="M3 6.5 L8 12.5 M8 6.5 L3 12.5" stroke="#fff" stroke-width="1.4"/></svg><svg class="abs" style="left:515px;top:7.5px" width="22" height="20" viewBox="0 0 22 20"><circle cx="12" cy="10" r="9.8" fill="#d04a2a"/><path d="M12 0.2 A9.8 9.8 0 0 1 21.8 10 H12 Z" fill="#e8714a"/><rect x="0" y="5" width="10" height="10" rx="1" fill="#b7472a"/><path d="M3.5 13 V7 H6 Q8 7 8 9 Q8 11 6 11 H3.5" stroke="#fff" stroke-width="1.3" fill="none"/></svg><svg class="abs" style="left:558px;top:8px" width="21" height="18" viewBox="0 0 21 18"><rect x="6" y="0" width="15" height="18" rx="1" fill="#0a64c8"/><rect x="13" y="0" width="8" height="8" fill="#28a8ea"/><path d="M6 9 L21 9 L21 18 L6 18 Z" fill="#1490df"/><rect x="0" y="3.5" width="10" height="11" rx="1" fill="#0a5cb8"/><ellipse cx="5" cy="9" rx="2.6" ry="3" fill="none" stroke="#fff" stroke-width="1.3"/></svg><svg class="abs" style="left:601px;top:8px" width="21" height="18" viewBox="0 0 21 18"><rect x="5" y="0" width="16" height="18" rx="1" fill="#2b5cb8"/><rect x="5" y="0" width="16" height="5" fill="#41a5ee"/><rect x="5" y="5" width="16" height="4.5" fill="#2b7cd3"/><rect x="5" y="9.5" width="16" height="4.5" fill="#185abd"/><rect x="0" y="3.5" width="11" height="11" rx="1" fill="#1a4fa8"/><path d="M2 6.5 L3.6 12 L5.5 7.5 L7.4 12 L9 6.5" stroke="#fff" stroke-width="1.1" fill="none"/></svg><svg class="abs" style="left:644px;top:6.5px" width="21" height="21" viewBox="0 0 38 38"><defs><radialGradient id="ff2" cx="0.6" cy="0.3" r="0.8"><stop offset="0" stop-color="#ffd84a"/><stop offset="0.45" stop-color="#ff8a2a"/><stop offset="0.8" stop-color="#ff3a4a"/><stop offset="1" stop-color="#d4206a"/></radialGradient></defs><path d="M19 37 Q3 36 2 20 Q2 10 9 5 Q8 10 11 12 Q15 5 24 1 Q22 6 25 8 Q36 12 36 22 Q35 36 19 37 Z" fill="url(#ff2)"/><circle cx="19" cy="20" r="8" fill="#7a3fd0"/></svg><div class="abs" style="left:677px;top:0;width:42px;height:34px;background:#343c48"></div><div class="abs" style="left:677px;top:32.5px;width:42px;height:2px;background:#7aa4d8"></div><svg class="abs" style="left:686px;top:9px" width="21" height="18" viewBox="0 0 21 18"><rect x="3" y="0.5" width="17" height="12" fill="#c8d4e0" stroke="#8c96a2" stroke-width="1"/><path d="M5 9 L8 5 L11 7 L14 3 L18 5" stroke="#3a78c8" stroke-width="1.3" fill="none"/><rect x="0" y="3" width="4" height="9" fill="#a8b0ba"/><ellipse cx="11.5" cy="15.5" rx="5" ry="2" fill="#a0a8b2"/></svg><svg class="abs" style="left:842px;top:9.5px" width="18" height="18" viewBox="0 0 18 18"><circle cx="8" cy="8.5" r="7.8" fill="#e8aa3a"/><circle cx="8" cy="8" r="6.5" fill="#f0c050"/><path d="M7 14 Q5 14 5 12 Q5 10 7.5 10 Q8.5 7.5 11.5 8 Q14 8.5 14 11 Q16.5 11 16.5 12.5 Q16.5 14 14.5 14 Z" fill="#b8cce0"/></svg><div class="tx" style="left:868.5px;top:12.5px;font-size:12px;line-height:12px;color:#dde1e7;letter-spacing:-0.4px">19°C</div><div class="tx" style="left:900.5px;top:12.5px;font-size:12px;line-height:12px;color:#dde1e7;letter-spacing:-0.05px">Mostly sunny</div><svg class="abs" style="left:987.5px;top:13.5px" width="12" height="7" viewBox="0 0 12 7"><path d="M0.7 6.3 L6 1 L11.3 6.3" stroke="#c8ccd3" stroke-width="1.1" fill="none"/></svg><svg class="abs" style="left:1014px;top:12.5px" width="14" height="10" viewBox="0 0 14 10"><path d="M2.5 9.5 Q0 9.5 0 7.3 Q0 5 2.7 5 Q3.5 1.5 7 1.5 Q10 1.5 10.8 4.5 Q14 4.5 14 7 Q14 9.5 11.5 9.5 Z" fill="#d4d8de"/></svg><svg class="abs" style="left:1042px;top:13.5px" width="14" height="9" viewBox="0 0 14 9"><rect x="0.5" y="0.5" width="12" height="8" fill="none" stroke="#d4d8de" stroke-width="1"/><rect x="1.5" y="1.5" width="9.5" height="6" fill="#d4d8de"/><rect x="13" y="3" width="1" height="3" fill="#d4d8de"/></svg><svg class="abs" style="left:1070px;top:12.5px" width="13" height="11" viewBox="0 0 13 11"><path d="M1 9.5 Q1.5 2 11.5 1 M3.5 10 Q4 5 10.5 4 M6 10.3 Q6.5 7.5 10 7" stroke="#c8ccd3" stroke-width="1" fill="none"/><circle cx="9.5" cy="9.5" r="1" fill="#c8ccd3"/></svg><svg class="abs" style="left:1096px;top:12px" width="13" height="11" viewBox="0 0 13 11"><path d="M0.6 3.5 H3 L6 0.8 V10.2 L3 7.5 H0.6 Z" stroke="#c8ccd3" stroke-width="1" fill="none"/><path d="M8 3.5 L12 7.5 M12 3.5 L8 7.5" stroke="#c8ccd3" stroke-width="1.1"/></svg><svg class="abs" style="left:1126px;top:10px" width="14" height="15" viewBox="0 0 14 15"><path d="M3 11 L5.5 8.5 L8 11 L5.5 13.5 Z" stroke="#b8bec6" stroke-width="1.3" fill="none"/><path d="M7.5 9.5 L11.5 4" stroke="#c4c9d0" stroke-width="2.3" stroke-linecap="round"/><path d="M9.5 7 Q12.5 7.5 12.3 9.5" stroke="#b8bec6" stroke-width="1.2" fill="none"/></svg><div class="tx" style="left:1156.5px;top:12.5px;font-size:11px;line-height:11px;color:#d0d4da;letter-spacing:-0.3px">ENG</div><div class="tx" style="left:1191.5px;top:5.2px;font-size:11px;line-height:11px;color:#d0d4da;letter-spacing:-0.3px">9:55 AM</div><div class="tx" style="left:1187.5px;top:20.2px;font-size:11px;line-height:11px;color:#d0d4da;letter-spacing:-0.25px">8/20/2021</div><svg class="abs" style="left:1251px;top:9.5px" width="22" height="22" viewBox="0 0 22 22"><path d="M0.5 0.5 H14 V11.5 H6 L3 14.5 V11.5 H0.5 Z" fill="#d4d8de"/><path d="M2.5 3.5 H12 M2.5 6 H12 M2.5 8.5 H9" stroke="#8a9098" stroke-width="0.9"/><circle cx="14.5" cy="14.7" r="6" fill="#1a2431" stroke="#c8ccd3" stroke-width="1"/><text x="14.5" y="18.3" text-anchor="middle" font-family="Liberation Sans" font-size="9.5" fill="#e0e3e8">2</text></svg><div class="abs" style="left:1282px;top:0;width:1px;height:34px;background:#59616c"></div></div>
</body></html>
